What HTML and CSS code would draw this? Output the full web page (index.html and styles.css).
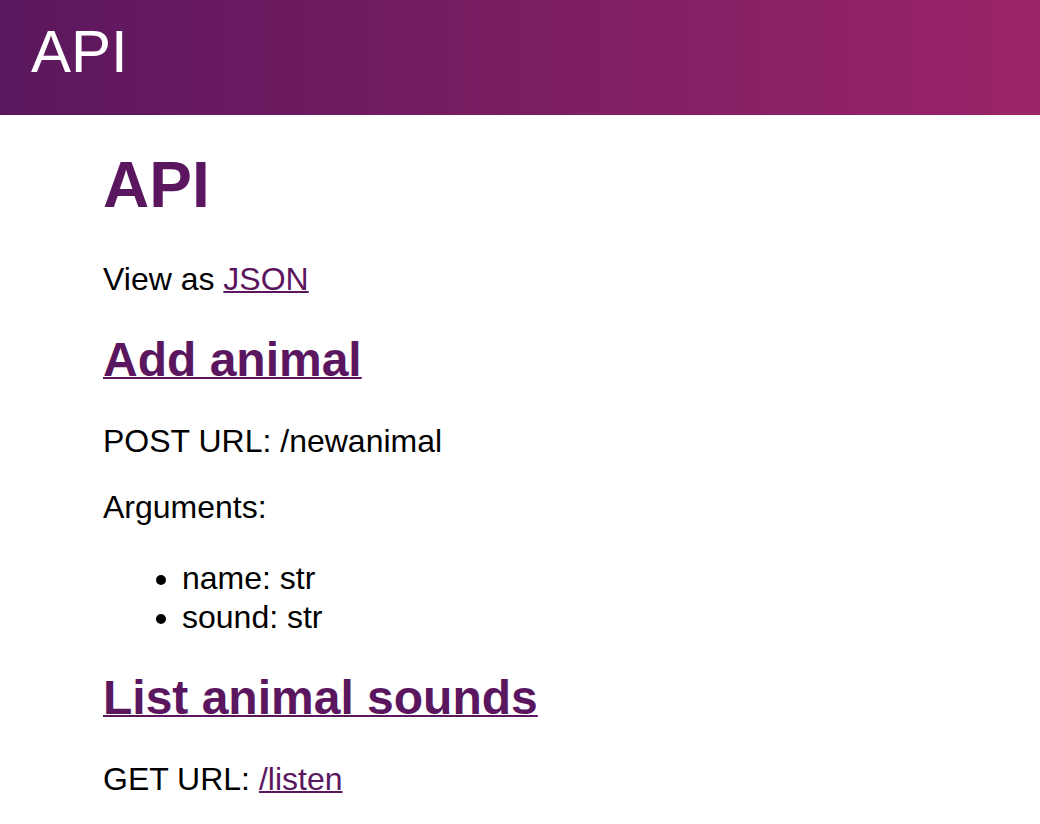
FILE: index.html
```html
<!DOCTYPE html>
<html lang="en">
<head>
<meta charset="utf-8">
<title>API</title>
<link rel="stylesheet" href="styles.css">
</head>
<body>
<header class="topbar">
  <div class="topbar-title">API</div>
</header>
<main class="content">
  <h1 class="page-title">API</h1>
  <p class="text">View as <a class="link" href="#">JSON</a></p>

  <h2 class="section-title"><a class="link" href="#">Add animal</a></h2>
  <p class="text">POST URL: /newanimal</p>
  <p class="text text-next">Arguments:</p>
  <ul class="args">
    <li>name: str</li>
    <li>sound: str</li>
  </ul>

  <h2 class="section-title"><a class="link" href="#">List animal sounds</a></h2>
  <p class="text">GET URL: <a class="link" href="#">/listen</a></p>
</main>
</body>
</html>
```

FILE: styles.css
```css
html, body {
  margin: 0;
  padding: 0;
  background: #ffffff;
}

body {
  font-family: "Liberation Sans", Arial, Helvetica, sans-serif;
  color: #000000;
}

.topbar {
  height: 115px;
  box-sizing: border-box;
  padding: 22px 31px 0;
  background: linear-gradient(to right, #5a175d, #9b2468);
}

.topbar-title {
  color: #ffffff;
  font-size: 60px;
  line-height: 60px;
}

.content {
  padding: 0 103px;
}

.page-title {
  margin: 33px 0 0;
  font-size: 64px;
  font-weight: bold;
  line-height: 74px;
  color: #5b1660;
}

.text {
  margin: 38px 0 0;
  font-size: 32px;
  line-height: 38px;
}

.section-title + .text {
  margin-top: 35px;
}

.text.text-next {
  margin-top: 28px;
}

.section-title {
  margin: 34px 0 0;
  font-size: 48px;
  font-weight: bold;
  line-height: 55px;
  color: #5b1660;
}

.link {
  color: #5b1660;
  text-decoration: underline;
  text-decoration-thickness: 2px;
}

.args {
  margin: 33px 0 0;
  padding-left: 79px;
  font-size: 32px;
  line-height: 38.5px;
}
```
